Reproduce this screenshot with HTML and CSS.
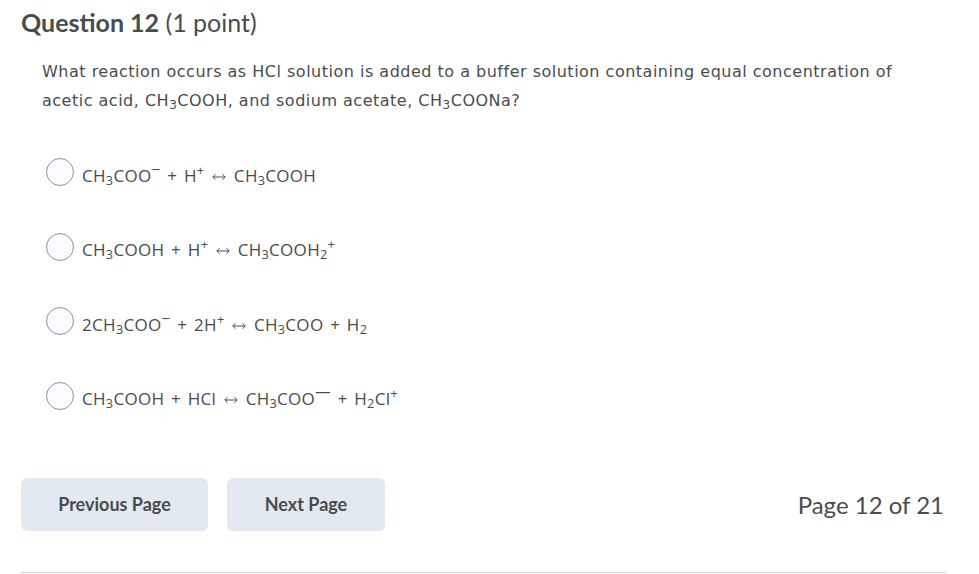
FILE: index.html
```html
<!DOCTYPE html>
<html>
<head>
<meta charset="utf-8">
<link rel="stylesheet" href="styles.css">
</head>
<body>
<div class="page">
  <h1 class="title"><span class="title-strong">Question 12</span> (1 point)</h1>
  <p class="question">What reaction occurs as HCl solution is added to a buffer solution containing equal concentration of<br>acetic acid, CH<sub>3</sub>COOH, and sodium acetate, CH<sub>3</sub>COONa?</p>
  <ul class="options">
    <li class="option"><span class="radio"></span><span class="eq">CH<sub>3</sub>COO<sup class="minus">−</sup> + H<sup>+</sup> <svg class="arrow" viewBox="0 0 14 8" width="14" height="8"><path d="M0.8 4H13.2M3.5 1.3L0.8 4L3.5 6.7M10.5 1.3L13.2 4L10.5 6.7" fill="none" stroke="#494c4e" stroke-width="1"/></svg> CH<sub>3</sub>COOH</span></li>
    <li class="option"><span class="radio"></span><span class="eq">CH<sub>3</sub>COOH + H<sup>+</sup> <svg class="arrow" viewBox="0 0 14 8" width="14" height="8"><path d="M0.8 4H13.2M3.5 1.3L0.8 4L3.5 6.7M10.5 1.3L13.2 4L10.5 6.7" fill="none" stroke="#494c4e" stroke-width="1"/></svg> CH<sub>3</sub>COOH<sub>2</sub><sup>+</sup></span></li>
    <li class="option"><span class="radio"></span><span class="eq">2CH<sub>3</sub>COO<sup class="minus">−</sup> + 2H<sup>+</sup> <svg class="arrow" viewBox="0 0 14 8" width="14" height="8"><path d="M0.8 4H13.2M3.5 1.3L0.8 4L3.5 6.7M10.5 1.3L13.2 4L10.5 6.7" fill="none" stroke="#494c4e" stroke-width="1"/></svg> CH<sub>3</sub>COO + H<sub>2</sub></span></li>
    <li class="option"><span class="radio"></span><span class="eq">CH<sub>3</sub>COOH + HCl <svg class="arrow" viewBox="0 0 14 8" width="14" height="8"><path d="M0.8 4H13.2M3.5 1.3L0.8 4L3.5 6.7M10.5 1.3L13.2 4L10.5 6.7" fill="none" stroke="#494c4e" stroke-width="1"/></svg> CH<sub>3</sub>COO<sup class="bar">—</sup> + H<sub>2</sub>Cl<sup>+</sup></span></li>
  </ul>
  <div class="nav">
    <div class="buttons">
      <button class="btn btn-prev">Previous Page</button>
      <button class="btn btn-next">Next Page</button>
    </div>
    <div class="counter">Page 12 of 21</div>
  </div>
  <div class="rule"></div>
</div>
</body>
</html>
```

FILE: styles.css
```css
html, body {
  margin: 0;
  padding: 0;
  background: #ffffff;
}
.page {
  padding: 0 33px 0 21px;
  color: #494c4e;
}
.title {
  margin: 0;
  padding-top: 6px;
  font-family: Lato, "Liberation Sans", sans-serif;
  font-size: 25px;
  font-weight: 400;
  line-height: 32px;
  color: #494c4e;
}
.title-strong {
  font-weight: 700;
}
.question {
  margin: 19px 0 0 21px;
  font-family: "DejaVu Sans", Verdana, sans-serif;
  font-size: 16px;
  letter-spacing: 0.5px;
  line-height: 29px;
  white-space: nowrap;
  color: #494c4e;
}
sub, sup {
  font-size: 0.75em;
  line-height: 0;
}
sub {
  vertical-align: -0.25em;
}
.options {
  list-style: none;
  margin: 42px 0 0 25px;
  padding: 0;
}
.option {
  display: flex;
  align-items: center;
  height: 30px;
  margin-bottom: 44.5px;
}
.option:last-child {
  margin-bottom: 0;
}
.radio {
  width: 26px;
  height: 26px;
  border: 1.5px solid #8d9094;
  border-radius: 50%;
  background: #f9fbff;
  flex: none;
  margin-right: 8px;
}
.eq {
  font-family: "Open Sans", "Noto Sans", sans-serif;
  font-size: 17px;
  letter-spacing: 0.3px;
  word-spacing: 2px;
  color: #494c4e;
  padding-top: 6px;
}
.minus {
  font-size: 0.9em;
}
.arrow {
  vertical-align: 1px;
  margin: 0 1px;
}
.bar {
  font-size: 0.9em;
  vertical-align: 0.55em;
}
.nav {
  display: flex;
  align-items: center;
  justify-content: space-between;
  margin-top: 67px;
}
.buttons {
  display: flex;
  gap: 19px;
}
.btn {
  height: 53px;
  border: none;
  border-radius: 6px;
  background: #e3e9f1;
  color: #494c4e;
  font-family: Lato, "Liberation Sans", sans-serif;
  font-weight: 700;
  font-size: 18px;
  padding: 0;
}
.btn-prev {
  width: 187px;
}
.btn-next {
  width: 158px;
}
.counter {
  font-family: Lato, "Liberation Sans", sans-serif;
  font-size: 24px;
  color: #494c4e;
  margin-right: 2px;
}
.rule {
  margin-top: 41px;
  height: 1px;
  background: #cdd5dc;
}
```
